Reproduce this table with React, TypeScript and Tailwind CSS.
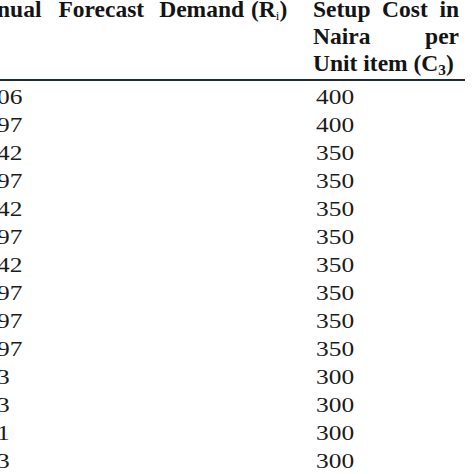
const ROWS: [string, string][] = [
  ['06', '400'],
  ['97', '400'],
  ['42', '350'],
  ['97', '350'],
  ['42', '350'],
  ['97', '350'],
  ['42', '350'],
  ['97', '350'],
  ['97', '350'],
  ['97', '350'],
  ['3', '300'],
  ['3', '300'],
  ['1', '300'],
  ['3', '300'],
];

export default function App() {
  return (
    <div className="w-[474px] h-[474px] overflow-hidden bg-white text-[#141414] font-['Liberation_Serif','Times_New_Roman',serif]">
      {/* header */}
      <div className="mt-[-4px] w-[465px] border-b-[2.5px] border-[#1f2b33] flex pb-[1.5px]">
        <div className="w-[313px] shrink-0 flex items-baseline font-bold text-[23.5px] leading-[27px] whitespace-nowrap">
          <span className="ml-[-33px]">Annual</span>
          <span className="ml-[17px]">Forecast</span>
          <span className="ml-[15px]">Demand</span>
          <span className="ml-[7px]">
            (R<sub className="text-[0.55em] font-normal">i</sub>)
          </span>
        </div>
        <div className="w-[146px] font-bold text-[23.5px] leading-[27px]">
          <div className="flex justify-between">
            <span>Setup</span>
            <span>Cost</span>
            <span>in</span>
          </div>
          <div className="flex justify-between">
            <span>Naira</span>
            <span>per</span>
          </div>
          <div className="whitespace-nowrap">
            Unit item (C<sub className="text-[0.65em]">3</sub>)
          </div>
        </div>
      </div>

      {/* body */}
      <div className="pt-[2px] text-[20px] leading-[28.05px] text-[#1a1a1a]">
        {ROWS.map(([a, b], i) => (
          <div key={i} className="flex">
            <div className="ml-[-3px] w-[319px] shrink-0">
              <span className="inline-block origin-left scale-x-[1.27]">{a}</span>
            </div>
            <div>
              <span className="inline-block origin-left scale-x-[1.27]">{b}</span>
            </div>
          </div>
        ))}
      </div>
    </div>
  );
}
